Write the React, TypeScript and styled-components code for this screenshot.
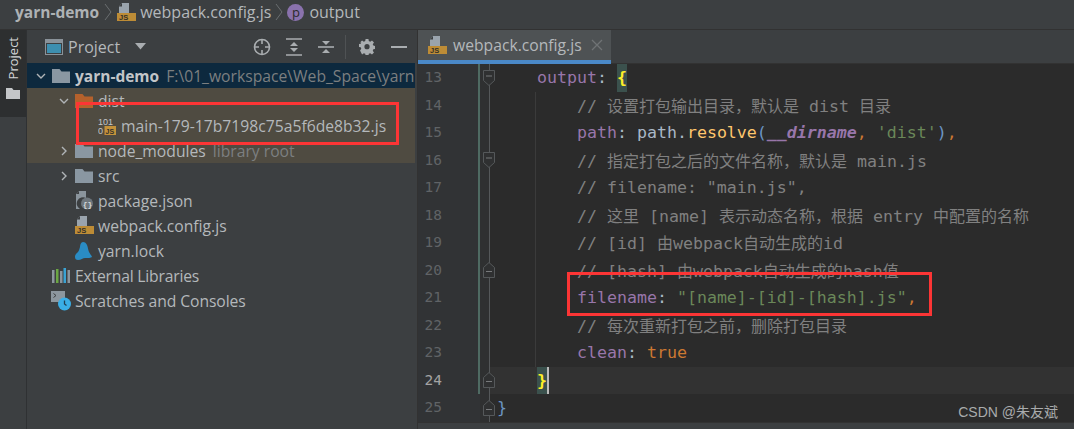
import React from "react";
import styled, { createGlobalStyle } from "styled-components";

const GlobalStyle = createGlobalStyle`
  html, body {
    margin: 0;
    padding: 0;
    background: #3c3f41;
  }
`;

const UI_FONT = `"Open Sans", "Noto Sans", "Noto Sans CJK SC", sans-serif`;
const CODE_FONT = `"DejaVu Sans Mono", "Noto Sans CJK SC", monospace`;

function FolderIcon({ color = "#8a97a2" }: { color?: string }) {
  return (
    <svg width="18" height="14" viewBox="0 0 18 14">
      <path d="M0 0h7.500l2 2.500H18V14H0z" fill={color} />
    </svg>
  );
}

function JsFileIcon() {
  return (
    <svg width="19" height="19" viewBox="0 0 19 19">
      <path d="M5 0h7v10H2V3.500z" fill="#9aa4ad" />
      <path d="M5 0v3.500H2z" fill="#3c3f41" />
      <rect x="0" y="10" width="19" height="8" fill="#bd8c36" />
      <text x="2" y="17" fontFamily="Liberation Sans" fontWeight="700" fontSize="7.500" fill="#33302a">
        JS
      </text>
    </svg>
  );
}

function BinJsIcon() {
  return (
    <svg width="19" height="18" viewBox="0 0 19 18">
      <text x="0" y="7.500" fontFamily="Liberation Sans" fontSize="9" fill="#c4c6c8">101</text>
      <text x="0" y="16.500" fontFamily="Liberation Sans" fontSize="9" fill="#c4c6c8">0</text>
      <rect x="6.500" y="9" width="11.500" height="9" fill="#c4923a" />
      <text x="7.500" y="16.500" fontFamily="Liberation Sans" fontWeight="700" fontSize="7" fill="#33302a">JS</text>
    </svg>
  );
}

function JsonIcon() {
  return (
    <svg width="18" height="19" viewBox="0 0 18 19">
      <path d="M4 0h7v7a6 6 0 0 0-6 11H1V3z" fill="#8a949c" />
      <path d="M4 0v3H1z" fill="#3c3f41" />
      <circle cx="12" cy="12.500" r="6" fill="#6e767c" />
      <text x="7.800" y="15.500" fontFamily="Liberation Mono" fontSize="8" fontWeight="700" fill="#d4d6d8">{"{}"}</text>
    </svg>
  );
}

function YarnIcon() {
  return (
    <svg width="18" height="18" viewBox="0 0 18 18">
      <path
        d="M8 0c2 0 3 1 4 3 1 2 1 5 2 7 1 2 3 4 3 5-1 1-4 1-7 1-2 0-4 2-7 2-2 0-3-1-3-3s1-3 2-4c2-2 2-3 3-6 0-2 1-5 3-5z"
        fill="#2a8cc4"
      />
    </svg>
  );
}

function LibrariesIcon() {
  return (
    <svg width="18" height="15" viewBox="0 0 18 15">
      <rect x="0" y="2" width="2.500" height="13" fill="#8c969e" />
      <rect x="4" y="1" width="2.500" height="14" fill="#6ba644" />
      <rect x="8" y="3" width="2.500" height="12" fill="#8c969e" />
      <rect x="11.500" y="0" width="2.500" height="15" fill="#3aa3d4" />
      <rect x="15.500" y="2" width="2.500" height="13" fill="#8c969e" />
    </svg>
  );
}

function ScratchIcon() {
  return (
    <svg width="20" height="20" viewBox="0 0 20 20">
      <rect x="0" y="0" width="14" height="11" fill="#8c969e" />
      <path d="M2.500 2.500l2.500 2-2.500 2" fill="none" stroke="#3c3f41" strokeWidth="1" />
      <circle cx="13.500" cy="13" r="6.500" fill="#3aaee6" />
      <path d="M13.500 9.500V13l2 1.500" fill="none" stroke="#1f3f55" strokeWidth="1.300" />
    </svg>
  );
}

function Chevron({ open }: { open: boolean }) {
  return (
    <svg width="10" height="10" viewBox="0 0 10 10">
      <path d={open ? "M1 3l4 4 4-4" : "M3 1l4 4-4 4"} fill="none" stroke="#b0b4b7" strokeWidth="1.400" />
    </svg>
  );
}

function Crumb() {
  return (
    <svg width="9" height="18" viewBox="0 0 9 18">
      <path d="M1 1l6 8-6 8" fill="none" stroke="#6a6e70" strokeWidth="1" />
    </svg>
  );
}

function FoldMark({ closing }: { closing?: boolean }) {
  return (
    <svg width="12" height="16" viewBox="0 0 12 16">
      <path
        d={closing ? "M.5 15.500v-10l5.500-5 5.500 5v10z" : "M.5 .5h11v10l-5.500 5-5.500-5z"}
        fill="#2f3031"
        stroke="#55585a"
      />
      <path d={closing ? "M3 9.500h6" : "M3 6h6"} stroke="#77797b" />
    </svg>
  );
}

// CJK runs sit at 16px, latin at the wider mono size
function Comment({ text }: { text: string }) {
  const parts = text.split(/([\u3000-\u9fff\uff00-\uffef]+)/);
  return (
    <Tok $k="comment">
      {parts.map((part, i) => (i % 2 === 1 ? <Cjk key={i}>{part}</Cjk> : part))}
    </Tok>
  );
}

function C({ k, children }: { k: string; children: React.ReactNode }) {
  return <Tok $k={k}>{children}</Tok>;
}

export default function App() {
  const lines: {
    n: number;
    indent: number;
    fold?: "open" | "close";
    code: React.ReactNode;
    current?: boolean;
    noMark?: boolean;
    guide?: boolean;
  }[] = [
    { n: 13, indent: 4, fold: "open", code: <><C k="prop">output</C><C k="plain">: </C><Brace>{"{"}</Brace></> },
    { n: 14, indent: 8, guide: true, code: <Comment text="// 设置打包输出目录，默认是 dist 目录" /> },
    { n: 15, indent: 8, guide: true, code: <><C k="prop">path</C><C k="plain">: path.</C><C k="fn">resolve</C><C k="paren">(</C><C k="dirname">__dirname</C><C k="comma">, </C><C k="str">'dist'</C><C k="paren">)</C><C k="comma">,</C></> },
    { n: 16, indent: 8, guide: true, fold: "open", code: <Comment text="// 指定打包之后的文件名称，默认是 main.js" /> },
    { n: 17, indent: 8, guide: true, code: <Comment text={'// filename: "main.js",'} /> },
    { n: 18, indent: 8, guide: true, code: <Comment text="// 这里 [name] 表示动态名称，根据 entry 中配置的名称" /> },
    { n: 19, indent: 8, guide: true, code: <Comment text="// [id] 由webpack自动生成的id" /> },
    { n: 20, indent: 8, guide: true, fold: "close", code: <Comment text="// [hash] 由webpack自动生成的hash值" /> },
    { n: 21, indent: 8, guide: true, code: <><C k="prop">filename</C><C k="plain">: </C><C k="str">"[name]-[id]-[hash].js"</C><C k="comma">,</C></> },
    { n: 22, indent: 8, guide: true, code: <Comment text="// 每次重新打包之前，删除打包目录" /> },
    { n: 23, indent: 8, guide: true, code: <><C k="prop">clean</C><C k="plain">: </C><C k="kw">true</C></> },
    { n: 24, indent: 4, fold: "close", current: true, code: <><Brace>{"}"}</Brace><Caret /></> },
    { n: 25, indent: 0, fold: "close", noMark: true, code: <C k="paren">{"}"}</C> },
  ];

  const tree: {
    depth: number;
    root?: boolean;
    chevron?: boolean;
    open?: boolean;
    bg?: string;
    track?: number;
    icon: React.ReactNode;
    name: string;
    hint?: string;
  }[] = [
    { depth: 0, root: true, chevron: true, open: true, bg: "#0d293e", icon: <FolderIcon />, name: "yarn-demo", hint: "F:\\01_workspace\\Web_Space\\yarn" },
    { depth: 1, chevron: true, open: true, bg: "#4f4b41", icon: <FolderIcon color="#b5612c" />, name: "dist" },
    { depth: 2, bg: "#4f4b41", icon: <BinJsIcon />, name: "main-179-17b7198c75a5f6de8b32.js" },
    { depth: 1, chevron: true, bg: "#4f4b41", icon: <FolderIcon />, name: "node_modules", hint: "library root" },
    { depth: 1, chevron: true, icon: <FolderIcon />, name: "src" },
    { depth: 1, icon: <JsonIcon />, name: "package.json" },
    { depth: 1, icon: <JsFileIcon />, name: "webpack.config.js" },
    { depth: 1, icon: <YarnIcon />, name: "yarn.lock" },
    { depth: 0, track: -0.2, icon: <LibrariesIcon />, name: "External Libraries" },
    { depth: 0, track: -0.08, icon: <ScratchIcon />, name: "Scratches and Consoles" },
  ];

  return (
    <Screen>
      <GlobalStyle />
      <NavBar>
        <NavRoot>yarn-demo</NavRoot>
        <Crumb />
        <NavItem>
          <JsFileIcon />
          webpack.config.js
        </NavItem>
        <Crumb />
        <NavItem>
          <PropBadge>p</PropBadge>
          output
        </NavItem>
      </NavBar>
      <Body>
        <SideStrip>
          <SideTab>
            <SideLabel>Project</SideLabel>
            <svg width="14" height="11" viewBox="0 0 14 11">
              <path d="M0 0h6l1.500 2H14v9H0z" fill="#c4c6c8" />
            </svg>
          </SideTab>
        </SideStrip>
        <ProjectPanel>
          <PanelHeader>
            <svg width="18" height="16" viewBox="0 0 18 16">
              <rect x=".5" y=".5" width="17" height="15" fill="none" stroke="#8a9299" />
              <rect x="1" y="1" width="16" height="3" fill="#8a9299" />
              <rect x="2" y="5" width="14" height="9" fill="#3d8fb0" />
            </svg>
            <PanelTitle>Project</PanelTitle>
            <svg width="12" height="7" viewBox="0 0 12 7">
              <path d="M0 0h11L5.500 6.500z" fill="#a9adb0" />
            </svg>
            <HeaderTools>
              <ToolIcon>
                <svg width="18" height="18" viewBox="0 0 18 18" fill="none" stroke="#a9adb0" strokeWidth="1.600">
                  <circle cx="9" cy="9" r="7.500" />
                  <path d="M9 1v5M9 12v5M1 9h5M12 9h5" />
                </svg>
              </ToolIcon>
              <ToolIcon>
                <svg width="16" height="18" viewBox="0 0 16 18">
                  <path d="M0 1h16M0 17h16" stroke="#a9adb0" strokeWidth="1.600" />
                  <path d="M8 4l4 4H4zM8 14l4-4H4z" fill="#a9adb0" />
                </svg>
              </ToolIcon>
              <ToolIcon>
                <svg width="16" height="18" viewBox="0 0 16 18">
                  <path d="M0 9h16" stroke="#a9adb0" strokeWidth="1.600" />
                  <path d="M8 7l-4-4h8zM8 11l-4 4h8z" fill="#a9adb0" />
                </svg>
              </ToolIcon>
              <ToolDivider />
              <ToolIcon>
                <svg width="16" height="16" viewBox="0 0 16 16">
                  <path
                    d="M6.500 0h3l.4 2.200 1.500.6L13.300 1.500l2.100 2.100-1.300 1.900.6 1.500 2.300.5v3l-2.300.4-.6 1.500 1.300 1.900-2.100 2.100-1.900-1.300-1.500.6-.4 2.200h-3l-.4-2.200-1.500-.6-1.900 1.300L.6 12.300l1.300-1.900-.6-1.500L-1 8.500v-3l2.300-.4.600-1.500L.6 3.600 2.700 1.500l1.900 1.300 1.500-.6z"
                    transform="translate(.5 0) scale(.94)"
                    fill="#a9adb0"
                  />
                  <circle cx="8" cy="7.700" r="2.600" fill="#3c3f41" />
                </svg>
              </ToolIcon>
              <ToolIcon>
                <svg width="16" height="4" viewBox="0 0 16 4">
                  <rect y="1" width="16" height="2" fill="#a9adb0" />
                </svg>
              </ToolIcon>
            </HeaderTools>
          </PanelHeader>
          <Tree>
            {tree.map((row) => (
              <TreeRow key={row.name} $bg={row.bg} $depth={row.depth}>
                <ChevronSlot>{row.chevron && <Chevron open={!!row.open} />}</ChevronSlot>
                <IconSlot>{row.icon}</IconSlot>
                <RowName $root={row.root} $track={row.track}>
                  {row.name}
                </RowName>
                {row.hint && <RowHint>{row.hint}</RowHint>}
              </TreeRow>
            ))}
          </Tree>
        </ProjectPanel>
        <Editor>
          <TabBar>
            <ActiveTab>
              <JsFileIcon />
              <TabName>webpack.config.js</TabName>
              <svg width="12" height="12" viewBox="0 0 12 12">
                <path d="M1 1l10 10M11 1L1 11" stroke="#6f7375" strokeWidth="1.300" />
              </svg>
            </ActiveTab>
          </TabBar>
          <CodeArea>
            {lines.map((line) => (
              <CodeRow key={line.n}>
                <LineNo $current={line.current}>{line.n}</LineNo>
                <ChangeMark $on={!line.noMark} />
                <FoldCol $current={line.current}>
                  {line.fold && <FoldMark closing={line.fold === "close"} />}
                </FoldCol>
                <CodeText $indent={line.indent} $current={line.current} $guide={line.guide}>
                  {line.code}
                </CodeText>
              </CodeRow>
            ))}
          </CodeArea>
          <BottomEdge />
        </Editor>
      </Body>
      <RedBox $x={76} $y={102} $w={323} $h={43} />
      <RedBox $x={567} $y={272} $w={365} $h={44} />
      <Watermark>CSDN @朱友斌</Watermark>
    </Screen>
  );
}

const Screen = styled.div`
  position: relative;
  width: 1074px;
  height: 429px;
  overflow: hidden;
  background: #3c3f41;
  font-family: ${UI_FONT};
  color: #b4b8bb;
`;

const NavBar = styled.div`
  display: flex;
  align-items: center;
  gap: 4px;
  height: 30px;
  padding: 0 0 5px 15px;
  box-sizing: border-box;
  border-bottom: 1px solid #323232;
  font-size: 16px;
`;

const NavRoot = styled.span`
  font-size: 15.500px;
  font-weight: 700;
  color: #aeb2b5;
  margin-right: 1px;
`;

const NavItem = styled.span`
  display: flex;
  align-items: center;
  gap: 4px;
`;

const PropBadge = styled.span`
  display: flex;
  align-items: center;
  justify-content: center;
  width: 17px;
  height: 17px;
  margin: 0 1px 0 -1px;
  border-radius: 50%;
  background: #8a72ad;
  color: #2b2b2b;
  font-size: 13px;
  line-height: 1;
`;

const Body = styled.div`
  display: flex;
  height: 399px;
`;

const SideStrip = styled.div`
  width: 26px;
  flex: none;
  border-right: 1px solid #2f3133;
`;

const SideTab = styled.div`
  display: flex;
  flex-direction: column;
  align-items: center;
  gap: 9px;
  height: 87px;
  padding-top: 7px;
  box-sizing: border-box;
  background: #2d2f30;
`;

const SideLabel = styled.span`
  writing-mode: vertical-rl;
  transform: rotate(180deg);
  font-size: 13px;
  color: #d4d6d8;
`;

const ProjectPanel = styled.div`
  width: 388px;
  flex: none;
  display: flex;
  flex-direction: column;
`;

const PanelHeader = styled.div`
  display: flex;
  align-items: center;
  height: 33px;
  padding-left: 18px;
  flex: none;
  svg {
    flex: none;
  }
`;

const PanelTitle = styled.span`
  font-size: 16px;
  margin: 0 15px 0 5px;
`;

const HeaderTools = styled.div`
  display: flex;
  align-items: center;
  margin-left: auto;
`;

const ToolIcon = styled.span`
  display: flex;
  justify-content: center;
  width: 32px;
`;

const ToolDivider = styled.span`
  width: 1px;
  height: 24px;
  background: #4f5254;
  margin: 0 5px 0 3px;
`;

const Tree = styled.div`
  display: flex;
  flex-direction: column;
`;

const TreeRow = styled.div<{ $bg?: string; $depth: number }>`
  display: flex;
  align-items: center;
  height: 25px;
  white-space: nowrap;
  overflow: hidden;
  font-size: 15.700px;
  padding-left: ${(p) => 4 + p.$depth * 23}px;
  background: ${(p) => p.$bg ?? "transparent"};
`;

const ChevronSlot = styled.span`
  display: flex;
  justify-content: center;
  width: 20px;
  flex: none;
`;

const IconSlot = styled.span`
  display: flex;
  justify-content: center;
  width: 20px;
  margin-right: 4px;
  flex: none;
`;

const RowName = styled.span<{ $root?: boolean; $track?: number }>`
  font-size: ${(p) => (p.$root ? "15.500px" : "inherit")};
  font-weight: ${(p) => (p.$root ? 700 : 400)};
  letter-spacing: ${(p) => p.$track ?? 0}px;
  color: ${(p) => (p.$root ? "#c2c5c8" : "#b4b8bb")};
`;

const RowHint = styled.span`
  margin-left: 7px;
  color: #7c7f80;
`;

const Editor = styled.div`
  flex: 1;
  min-width: 0;
  display: flex;
  flex-direction: column;
  margin-left: 2px;
  border-left: 1px solid #323232;
`;

const TabBar = styled.div`
  display: flex;
  height: 34px;
  flex: none;
  box-sizing: border-box;
  border-bottom: 1px solid #323232;
`;

const ActiveTab = styled.div`
  display: flex;
  align-items: center;
  gap: 6px;
  width: 193px;
  height: 34px;
  flex: none;
  box-sizing: border-box;
  padding: 0 0 0 10px;
  background: #4e5254;
  border-bottom: 4px solid #4a88c7;
`;

const TabName = styled.span`
  font-size: 15.700px;
  margin-right: 3px;
`;

const CodeArea = styled.div`
  display: flex;
  flex-direction: column;
  flex: none;
`;

const CodeRow = styled.div`
  display: flex;
  height: 27.500px;
  font-family: ${CODE_FONT};
`;

const LineNo = styled.span<{ $current?: boolean }>`
  width: 24px;
  padding-right: 36px;
  flex: none;
  text-align: right;
  background: #313335;
  font-size: 14.500px;
  line-height: 27.500px;
  color: ${(p) => (p.$current ? "#a4a3a3" : "#606366")};
`;

const ChangeMark = styled.span<{ $on: boolean }>`
  width: 2px;
  flex: none;
  background: ${(p) => (p.$on ? "#4f6b63" : "#313335")};
`;

const FoldCol = styled.span<{ $current?: boolean }>`
  width: 17px;
  flex: none;
  display: flex;
  align-items: center;
  justify-content: center;
  background:
    linear-gradient(#55585a, #55585a) 9px 0 / 1px 100% no-repeat,
    linear-gradient(#2f3031, #2f3031) 0 0 / 9px 100% no-repeat,
    ${(p) => (p.$current ? "#323232" : "#2b2b2b")};
`;

const CodeText = styled.div<{ $indent: number; $current?: boolean; $guide?: boolean }>`
  flex: 1;
  white-space: pre;
  font-size: 16.600px;
  line-height: 27.500px;
  padding-left: ${(p) => p.$indent * 10}px;
  background: ${(p) =>
    p.$guide
      ? "linear-gradient(#3b3b3b, #3b3b3b) 38px 0 / 1px 100% no-repeat #2b2b2b"
      : p.$current
        ? "#323232"
        : "#2b2b2b"};
`;

const Cjk = styled.span`
  font-family: "Noto Sans CJK SC", sans-serif;
  font-size: 16px;
`;

const tokenColors: Record<string, string> = {
  prop: "#9876aa",
  plain: "#a9b7c6",
  comment: "#808080",
  fn: "#ffc66d",
  paren: "#6c95c4",
  comma: "#cc7832",
  str: "#6a8759",
  kw: "#cc7832",
  dirname: "#9876aa",
};

const Tok = styled.span<{ $k: string }>`
  color: ${(p) => tokenColors[p.$k]};
  font-style: ${(p) => (p.$k === "dirname" ? "italic" : "normal")};
  font-weight: ${(p) => (p.$k === "dirname" ? 700 : 400)};
`;

const Brace = styled.span`
  display: inline-block;
  height: 27.500px;
  vertical-align: top;
  background: #3b514d;
  color: #ffef28;
  font-weight: 700;
`;

const Caret = styled.span`
  display: inline-block;
  width: 2px;
  height: 27.500px;
  vertical-align: top;
  background: #bbbbbb;
`;

const BottomEdge = styled.div`
  height: 6px;
  flex: none;
  border-top: 1px solid #323232;
`;

const RedBox = styled.div<{ $x: number; $y: number; $w: number; $h: number }>`
  position: absolute;
  left: ${(p) => p.$x}px;
  top: ${(p) => p.$y}px;
  width: ${(p) => p.$w}px;
  height: ${(p) => p.$h}px;
  box-sizing: border-box;
  border: 3px solid #fc3535;
`;

const Watermark = styled.div`
  position: absolute;
  right: 16px;
  bottom: 8px;
  font-family: "Liberation Sans", "Noto Sans CJK SC", sans-serif;
  font-size: 14px;
  color: #a9abad;
`;
